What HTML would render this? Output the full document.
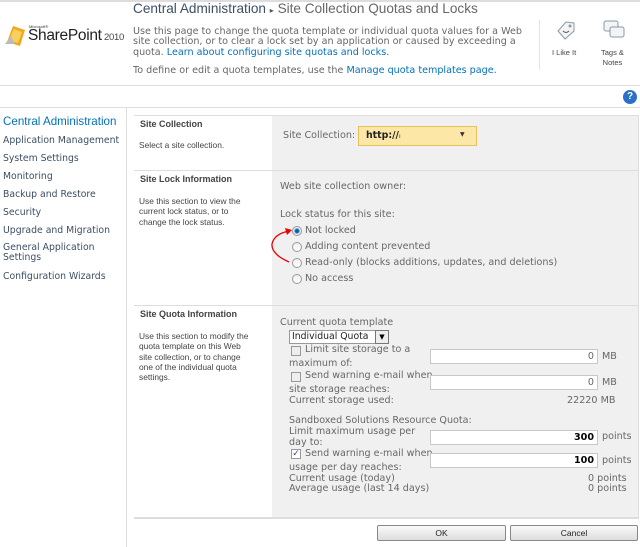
<!DOCTYPE html>
<html><head><meta charset="utf-8"><style>
*{margin:0;padding:0;box-sizing:border-box}
body{width:640px;height:547px;background:#fff;position:relative;overflow:hidden;font-family:"DejaVu Sans",Verdana,sans-serif;color:#676767}
.a{position:absolute;white-space:nowrap}
.t{font-size:9.6px;line-height:10.5px;color:#676767}
.n{font-size:9.3px;color:#3b4f65}
.s{font-family:"Liberation Sans",Arial,sans-serif;font-size:8.4px;line-height:10.3px;color:#444}
.h{font-family:"Liberation Sans",Arial,sans-serif;font-size:9px;font-weight:bold;color:#444}
a{color:#0072bc;text-decoration:none}
.rad{width:10px;height:10px;border:1px solid #999;border-radius:50%;background:linear-gradient(#eee,#fff)}
.cb{width:10px;height:10px;border:1px solid #999;background:#eee}
.in{height:15px;border:1px solid #c8c8c8;background:#fff;text-align:right;padding-right:3px;font-size:9.6px;line-height:13px}
.btn{height:16px;border:1px solid #888;border-radius:2px;background:linear-gradient(#fafafa,#ddd);font-family:"Liberation Sans",Arial,sans-serif;font-size:8.5px;color:#222;text-align:center;line-height:14px}
</style></head><body>
<div class="a" style="left:0;top:0;width:640px;height:2px;background:#ddd"></div>
<svg class="a" style="left:3px;top:22px" width="26" height="26" viewBox="0 0 26 26">
<path d="M4 20 L10 4 L22 8 L17 24 Z" fill="#f2a81d"/><path d="M6 18 L11 7 L19 10 L15 21Z" fill="#f8d060"/>
<path d="M2 22 L8 14 L12 22Z" fill="#bbb"/></svg>
<div class="a" style="left:29px;top:24px;font-family:'Liberation Sans',sans-serif;font-size:4px;color:#333">Microsoft®</div>
<div class="a" style="left:28px;top:27px;font-family:'Liberation Sans',sans-serif;font-size:15.5px;color:#222;letter-spacing:-0.3px">SharePoint<span style="font-size:9.5px;color:#444"> 2010</span></div>
<div class="a" style="left:133px;top:1px;font-family:'Liberation Sans',sans-serif;font-size:13.6px;color:#3b4f65">Central Administration <span style="font-size:8px;color:#555">▸</span> <span style="color:#676767">Site Collection Quotas and Locks</span></div>
<div class="a t" style="left:133px;top:27px;line-height:10.3px">Use this page to change the quota template or individual quota values for a Web<br>site collection, or to clear a lock set by an application or caused by exceeding a<br>quota. <a>Learn about configuring site quotas and locks.</a></div>
<div class="a t" style="left:133px;top:66px">To define or edit a quota templates, use the <a>Manage quota templates page.</a></div>
<div class="a" style="left:539px;top:20px;width:1px;height:50px;background:#e3e3e3"></div>
<svg class="a" style="left:555px;top:19px" width="22" height="22" viewBox="0 0 22 22"><path d="M3 12 L11 3 L19 4 L19 12 L10 20Z" fill="#f4f4f4" stroke="#8a9aa8"/><circle cx="15" cy="7" r="1.5" fill="#8a9aa8"/><path d="M8 12 q3 3 6 0" stroke="#556" fill="none"/></svg>
<div class="a" style="left:552px;top:48px;font-family:'Liberation Sans',sans-serif;font-size:7.5px;color:#444">I Like It</div>
<svg class="a" style="left:602px;top:18px" width="24" height="24" viewBox="0 0 24 24"><rect x="2" y="3" width="14" height="10" rx="2" fill="#f4f4f4" stroke="#8a9aa8"/><rect x="8" y="9" width="14" height="10" rx="2" fill="#f4f4f4" stroke="#8a9aa8"/></svg>
<div class="a" style="left:601px;top:48px;font-family:'Liberation Sans',sans-serif;font-size:7.5px;color:#444;text-align:center;line-height:10px">Tags &amp;<br>Notes</div>
<div class="a" style="left:0;top:85px;width:640px;height:1px;background:#ddd"></div>
<div class="a" style="left:0;top:107px;width:640px;height:1px;background:#ddd"></div>
<div class="a" style="left:623px;top:90px;width:14px;height:14px;border-radius:50%;background:#2b6fc7;color:#fff;font:bold 10px/14px 'Liberation Sans',sans-serif;text-align:center">?</div>
<div class="a" style="left:126px;top:108px;width:1px;height:439px;background:#ddd"></div>
<div class="a" style="left:3px;top:115px;font-family:'Liberation Sans',sans-serif;font-size:11.6px;color:#0072bc">Central Administration</div>
<div class="a n" style="left:3px;top:135px">Application Management</div>
<div class="a n" style="left:3px;top:153px">System Settings</div>
<div class="a n" style="left:3px;top:171px">Monitoring</div>
<div class="a n" style="left:3px;top:189px">Backup and Restore</div>
<div class="a n" style="left:3px;top:207px">Security</div>
<div class="a n" style="left:3px;top:225px">Upgrade and Migration</div>
<div class="a n" style="left:3px;top:243px;line-height:10px">General Application<br>Settings</div>
<div class="a n" style="left:3px;top:271px">Configuration Wizards</div>
<div class="a" style="left:272px;top:116px;width:366px;height:401px;background:#f0f0f0"></div>
<div class="a" style="left:134px;top:115px;width:505px;height:1px;background:#ddd"></div>
<div class="a" style="left:134px;top:170px;width:505px;height:1px;background:#ddd"></div>
<div class="a" style="left:134px;top:305px;width:505px;height:1px;background:#ddd"></div>
<div class="a" style="left:134px;top:517px;width:505px;height:2px;background:#ddd"></div>
<div class="a" style="left:638px;top:116px;width:1px;height:401px;background:#ddd"></div>
<div class="a h" style="left:140px;top:119px">Site Collection</div>
<div class="a s" style="left:139px;top:140px">Select a site collection.</div>
<div class="a t" style="left:283px;top:131px">Site Collection:</div>
<div class="a" style="left:358px;top:126px;width:119px;height:20px;background:#fce7a6;border:1px solid #e6c15e"></div>
<div class="a" style="left:366px;top:130px;font-size:9.4px;font-weight:bold;color:#222">http://<span style="font-weight:normal;font-size:6px">ı</span></div>
<div class="a" style="left:460px;top:131px;font-size:6px;color:#333">▼</div>
<div class="a h" style="left:140px;top:174px">Site Lock Information</div>
<div class="a s" style="left:139px;top:196px">Use this section to view the<br>current lock status, or to<br>change the lock status.</div>
<div class="a t" style="left:280px;top:182px">Web site collection owner:</div>
<div class="a t" style="left:280px;top:210px">Lock status for this site:</div>
<div class="a rad" style="left:292px;top:226px;background:radial-gradient(#0a5ea8 30%,#8cc2ec 45%,#eee 60%)"></div><div class="a t" style="left:305px;top:226px">Not locked</div>
<div class="a rad" style="left:292px;top:242px"></div><div class="a t" style="left:305px;top:242px">Adding content prevented</div>
<div class="a rad" style="left:292px;top:258px"></div><div class="a t" style="left:305px;top:258px">Read-only (blocks additions, updates, and deletions)</div>
<div class="a rad" style="left:292px;top:274px"></div><div class="a t" style="left:305px;top:274px">No access</div>
<svg class="a" style="left:265px;top:224px" width="30" height="40" viewBox="0 0 30 40"><path d="M24 38 Q6 30 7 20 Q9 10 24 7" stroke="#e00" stroke-width="1.3" fill="none"/><path d="M27 6 L20 4 L22 11Z" fill="#e00"/></svg>
<div class="a h" style="left:140px;top:309px">Site Quota Information</div>
<div class="a s" style="left:139px;top:331px">Use this section to modify the<br>quota template on this Web<br>site collection, or to change<br>one of the individual quota<br>settings.</div>
<div class="a t" style="left:280px;top:318px">Current quota template</div>
<div class="a" style="left:289px;top:330px;width:100px;height:14px;background:#fff;border:1px solid #999;font-size:9.3px;line-height:12px;color:#222;padding-left:2px">Individual Quota</div>
<div class="a" style="left:375px;top:330px;width:14px;height:14px;border:1px solid #777;background:#eee;font-size:7px;text-align:center;line-height:12px;color:#000">▼</div>
<div class="a cb" style="left:291px;top:346px"></div><div class="a t" style="left:305px;top:345px">Limit site storage to a</div>
<div class="a t" style="left:289px;top:359px">maximum of:</div>
<div class="a in" style="left:430px;top:349px;width:168px">0</div><div class="a t" style="left:602px;top:352px">MB</div>
<div class="a cb" style="left:291px;top:372px"></div><div class="a t" style="left:305px;top:371px">Send warning e-mail when</div>
<div class="a t" style="left:289px;top:385px">site storage reaches:</div>
<div class="a in" style="left:430px;top:375px;width:168px">0</div><div class="a t" style="left:602px;top:378px">MB</div>
<div class="a t" style="left:289px;top:396px">Current storage used:</div><div class="a t" style="left:567px;top:396px">22220 MB</div>
<div class="a t" style="left:289px;top:416px">Sandboxed Solutions Resource Quota:</div>
<div class="a t" style="left:289px;top:427px">Limit maximum usage per<br>day to:</div>
<div class="a in" style="left:430px;top:430px;width:168px;color:#000;font-weight:bold">300</div><div class="a t" style="left:602px;top:432px">points</div>
<div class="a cb" style="left:291px;top:449px;background:#fff;font-size:9px;line-height:8px;color:#2a4a9a;text-align:center">✓</div><div class="a t" style="left:305px;top:449px">Send warning e-mail when</div>
<div class="a in" style="left:430px;top:453px;width:168px;color:#000;font-weight:bold">100</div><div class="a t" style="left:602px;top:456px">points</div>
<div class="a t" style="left:289px;top:463px">usage per day reaches:</div>
<div class="a t" style="left:289px;top:474px">Current usage (today)</div><div class="a t" style="left:588px;top:474px">0 points</div>
<div class="a t" style="left:289px;top:484px">Average usage (last 14 days)</div><div class="a t" style="left:588px;top:484px">0 points</div>
<div class="a btn" style="left:377px;top:525px;width:129px">OK</div>
<div class="a btn" style="left:510px;top:525px;width:128px">Cancel</div>
</body></html>
